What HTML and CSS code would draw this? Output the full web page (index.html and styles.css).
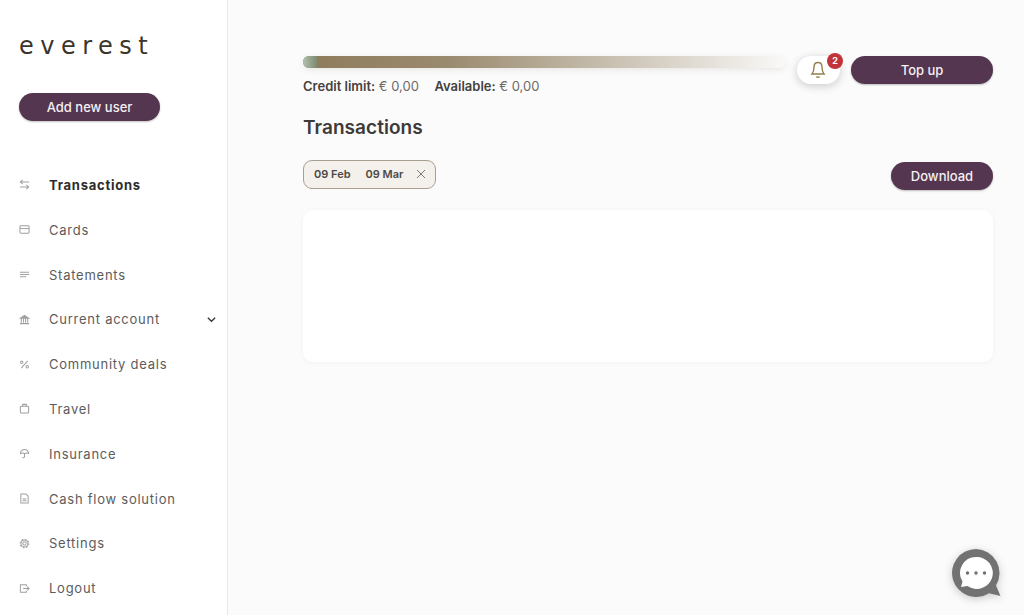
FILE: index.html
```html
<!DOCTYPE html>
<html lang="en">
<head>
    <meta charset="UTF-8">
    <meta name="viewport" content="width=device-width, initial-scale=1.0">
    <title>Everest - Transactions</title>
    <link rel="stylesheet" href="styles.css">
</head>
<body>
    <div class="app">
        <aside class="sidebar">
            <div class="logo">everest</div>
            <button class="btn add-user">Add new user</button>
            <nav class="menu">
                <a class="menu-item active">
                    <svg class="menu-icon" viewBox="0 0 12 12"><path d="M4 1 1.500 3.300 4 5.600M1.500 3.300H11M8 6.400l2.500 2.300L8 11M10.500 8.700H1"/></svg>
                    <span>Transactions</span>
                </a>
                <a class="menu-item">
                    <svg class="menu-icon" viewBox="0 0 12 12"><rect x="1" y="2" width="10" height="8" rx="1"/><path d="M1 5h10"/></svg>
                    <span>Cards</span>
                </a>
                <a class="menu-item">
                    <svg class="menu-icon" viewBox="0 0 12 12"><path d="M1 3.500h10M1 6h10M1 8.500h7"/></svg>
                    <span>Statements</span>
                </a>
                <a class="menu-item">
                    <svg class="menu-icon" viewBox="0 0 12 12"><path class="solid" d="M1.500 4.500 6 1.500l4.500 3z"/><path d="M2.500 5v4.500M4.800 5v4.500M7.200 5v4.500M9.500 5v4.500M1 10.500h10"/></svg>
                    <span>Current account</span>
                    <svg class="chevron" viewBox="0 0 12 12"><path d="M2 4l4 4 4-4"/></svg>
                </a>
                <a class="menu-item">
                    <svg class="menu-icon" viewBox="0 0 12 12"><path d="M9.500 2 2.500 10"/><circle cx="3" cy="3.500" r="1.300"/><circle cx="9" cy="8.500" r="1.300"/></svg>
                    <span>Community deals</span>
                </a>
                <a class="menu-item">
                    <svg class="menu-icon" viewBox="0 0 12 12"><rect x="1.500" y="3.500" width="9" height="7.500" rx="1"/><path d="M4 3.500V1.500h4v2"/></svg>
                    <span>Travel</span>
                </a>
                <a class="menu-item">
                    <svg class="menu-icon" viewBox="0 0 12 12"><path d="M1.500 6A4.500 4.300 0 1 1 10.500 6C9 5.200 7.500 5.200 6 6 4.500 5.200 3 5.200 1.500 6zM6 6v3.500a1.200 1.200 0 0 1-2.200.500"/></svg>
                    <span>Insurance</span>
                </a>
                <a class="menu-item">
                    <svg class="menu-icon" viewBox="0 0 12 12"><path d="M2 1h5.500L10 3.500V11H2zM4 6.500h4M4 8.500h4"/></svg>
                    <span>Cash flow solution</span>
                </a>
                <a class="menu-item">
                    <svg class="menu-icon" viewBox="0 0 12 12"><circle cx="6" cy="6" r="1.800"/><circle cx="6" cy="6" r="3.800"/><circle cx="6" cy="6" r="4.700" stroke-dasharray="1.500 2.190"/></svg>
                    <span>Settings</span>
                </a>
                <a class="menu-item">
                    <svg class="menu-icon" viewBox="0 0 12 12"><path d="M8 3.500V2H1.500v8H8V8.500M4.500 6H11M9 4l2 2-2 2"/></svg>
                    <span>Logout</span>
                </a>
            </nav>
        </aside>

        <main class="content">
            <div class="top-row">
                <div class="credit">
                    <div class="bar"><div class="bar-start"></div></div>
                    <p class="credit-text"><b>Credit limit:</b> € 0,00 <b class="second">Available:</b> € 0,00</p>
                </div>
                <div class="bell-box">
                    <svg class="bell" viewBox="0 0 16 18"><path d="M8 1.500c-2.800 0-4 2.200-4 4.500 0 3.500-.7 5.500-2 7h12c-1.300-1.500-2-3.500-2-7 0-2.300-1.200-4.500-4-4.500zM6.500 15.500c.3 1 2.700 1 3 0"/></svg>
                    <span class="badge">2</span>
                </div>
                <button class="btn top-up">Top up</button>
            </div>

            <h1 class="title">Transactions</h1>

            <div class="filter-row">
                <div class="date-filter">
                    <span>09 Feb</span>
                    <span>09 Mar</span>
                    <svg class="close" viewBox="0 0 10 10"><path d="M1 1l8 8M9 1 1 9"/></svg>
                </div>
                <button class="btn download">Download</button>
            </div>

            <div class="panel"></div>
        </main>
    </div>

    <div class="chat">
        <svg viewBox="0 0 52 52"><path class="chat-ring" d="M26 2a24 24 0 1 0 13 44.200l11.500 2.800-4.500-10.500A24 24 0 0 0 26 2z"/><path class="chat-inner" d="M26 10a16 16 0 0 0-13.500 24.500L11 40l6.500-1A16 16 0 1 0 26 10z"/><circle class="chat-dot" cx="17.500" cy="26" r="1.700"/><circle class="chat-dot" cx="26" cy="26" r="1.700"/><circle class="chat-dot" cx="34.500" cy="26" r="1.700"/></svg>
    </div>
</body>
</html>
```

FILE: styles.css
```css
* {
    box-sizing: border-box;
}

body {
    margin: 0;
    font-family: Inter, "Open Sans", sans-serif;
    background-color: #fcfbfc;
    color: #3d3a38;
    overflow: hidden;
}

.app {
    display: flex;
    height: 615px;
}

.sidebar {
    width: 228px;
    flex-shrink: 0;
    padding: 35px 10px 0 19px;
    background-color: #fff;
    border-right: 1px solid #e8e8e8;
}

.logo {
    height: 22px;
    font-family: "DejaVu Sans", sans-serif;
    font-size: 24px;
    line-height: 22px;
    letter-spacing: 6.500px;
    font-weight: 400;
    color: #3b352c;
}

.btn {
    display: block;
    height: 28px;
    padding: 0;
    border: none;
    border-radius: 14px;
    background-color: #543650;
    color: #f4eff3;
    font-family: inherit;
    font-size: 13px;
    font-weight: 500;
    box-shadow: 0 1px 2px rgba(0, 0, 0, 0.25);
}

.add-user {
    width: 141px;
    margin-top: 36px;
}

.menu {
    margin-top: 41.600px;
}

.menu-item {
    display: flex;
    align-items: center;
    height: 44.800px;
    color: #5c5c5c;
    font-size: 13px;
    letter-spacing: 0.750px;
}

.menu-item.active {
    color: #2e2c2b;
    font-weight: 700;
}

.menu-icon {
    width: 11px;
    height: 11px;
    margin-right: 19px;
    flex-shrink: 0;
    fill: none;
    stroke: #a0a0a0;
    stroke-width: 1.100;
}

.menu-icon .solid {
    fill: #a0a0a0;
}

.chevron {
    width: 11px;
    height: 11px;
    margin-left: auto;
    fill: none;
    stroke: #3a3a3a;
    stroke-width: 1.500;
}

.content {
    flex: 1;
    padding: 56px 31px 0 75px;
}

.top-row {
    display: flex;
    align-items: flex-start;
}

.credit {
    width: 482px;
}

.bar {
    height: 12px;
    border-radius: 6px;
    background: linear-gradient(90deg, #8f7b5c 0%, #9a8a6e 30%, #faf9f8 100%);
    box-shadow: 0 2px 6px rgba(120, 110, 90, 0.14);
    overflow: hidden;
}

.bar-start {
    width: 14px;
    height: 12px;
    background: linear-gradient(90deg, #b4c0b0, #7b8a70);
}

.credit-text {
    margin: 10px 0 0;
    font-size: 13px;
    color: #6d6a66;
}

.credit-text b {
    font-weight: 600;
    color: #45423e;
}

.credit-text .second {
    margin-left: 12px;
}

.bell-box {
    position: relative;
    width: 43px;
    height: 28px;
    margin-left: 12px;
    display: flex;
    align-items: center;
    justify-content: center;
    border-radius: 14px;
    background-color: #fff;
    box-shadow: 0 2px 10px rgba(0, 0, 0, 0.2);
}

.bell {
    width: 16px;
    height: 18px;
    margin-right: 1px;
    fill: none;
    stroke: #94804f;
    stroke-width: 1.400;
}

.badge {
    position: absolute;
    top: -3px;
    right: -3px;
    width: 16px;
    height: 16px;
    border-radius: 50%;
    background-color: #c1343a;
    color: #fff;
    font-size: 9px;
    font-weight: 700;
    line-height: 16px;
    text-align: center;
}

.top-up {
    width: 142px;
    margin-left: 11px;
}

.title {
    margin: 22px 0 0;
    font-size: 19px;
    line-height: 24px;
    font-weight: 600;
    letter-spacing: 0.050px;
    color: #3d3a38;
}

.filter-row {
    display: flex;
    align-items: flex-start;
    justify-content: space-between;
    margin-top: 20px;
}

.date-filter {
    display: flex;
    align-items: center;
    width: 133px;
    height: 29px;
    padding: 0 10px 2px;
    border: 1px solid #a89f92;
    border-radius: 9px;
    background-color: #f4f0eb;
    font-size: 11px;
    font-weight: 600;
    color: #4d4a46;
}

.date-filter span + span {
    margin-left: 15px;
}

.close {
    width: 10px;
    height: 10px;
    margin-left: auto;
    margin-right: -1px;
    fill: none;
    stroke: #7a7a7a;
    stroke-width: 1;
}

.download {
    width: 102px;
    margin-top: 2px;
}

.panel {
    height: 152px;
    margin-top: 20px;
    border-radius: 10px;
    background-color: #fff;
    box-shadow: 0 1px 6px rgba(0, 0, 0, 0.04);
}

.chat {
    position: absolute;
    left: 950px;
    top: 547px;
    width: 52px;
    height: 52px;
    filter: drop-shadow(0 2px 4px rgba(0, 0, 0, 0.2));
}

.chat-ring {
    fill: #727272;
}

.chat-inner {
    fill: #fff;
}

.chat-dot {
    fill: #6f6f6f;
}
```
